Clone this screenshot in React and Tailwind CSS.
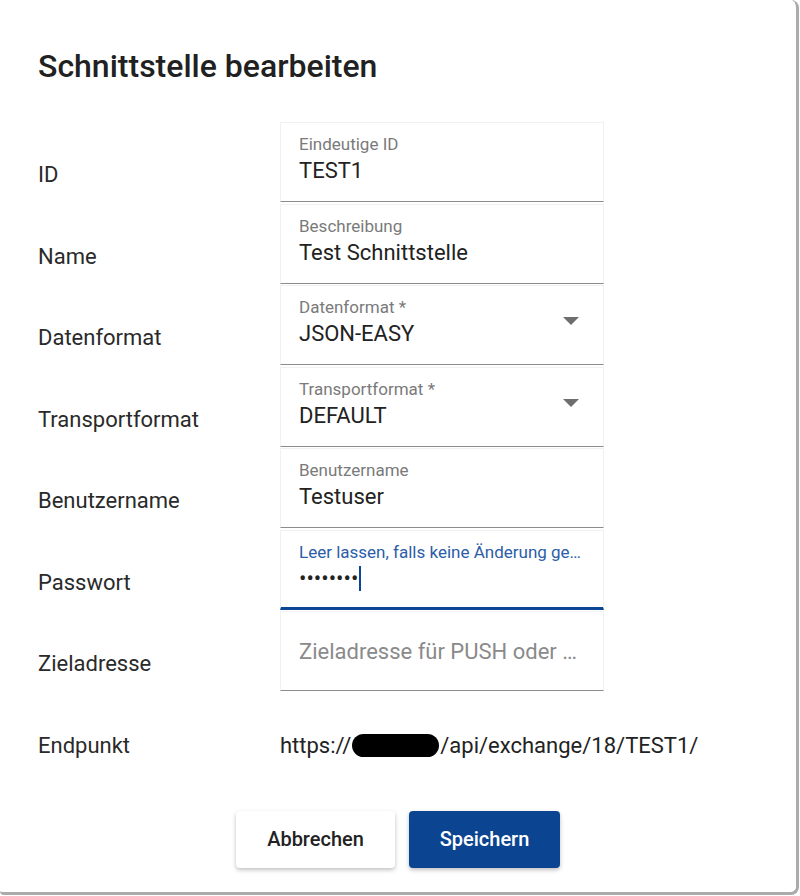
const rows = [
  { label: 'ID', field: 'Eindeutige ID', value: 'TEST1' },
  { label: 'Name', field: 'Beschreibung', value: 'Test Schnittstelle' },
  { label: 'Datenformat', field: 'Datenformat *', value: 'JSON-EASY', select: true },
  { label: 'Transportformat', field: 'Transportformat *', value: 'DEFAULT', select: true },
  { label: 'Benutzername', field: 'Benutzername', value: 'Testuser' },
];

function Field({ field, value, select }) {
  return (
    <div className="relative h-[80px] w-[324px] border-x border-t border-[#f1f1f1] border-b-[1.5px] border-b-[#8c8c8c] bg-white pl-[18px] pt-[12px]">
      <div className="text-[17px] leading-[18px] text-[#7a7a7a]">{field}</div>
      <div className="mt-[4px] text-[22px] leading-[28px] text-[#222]">{value}</div>
      {select ? (
        <svg className="absolute right-[24px] top-[31px]" width="16" height="8" viewBox="0 0 16 8">
          <path d="M0 0 L16 0 L8 8 Z" fill="#6e6e6e" />
        </svg>
      ) : null}
    </div>
  );
}

function Row({ label, children }) {
  return (
    <div className="mb-[1.5px] flex">
      <div className="w-[242px] pt-[39px] text-[22px] leading-[28px] text-[#2a2a2a]">{label}</div>
      {children}
    </div>
  );
}

export default function App() {
  return (
    <div className="h-[896px] w-[800px] bg-white" style={{ fontFamily: 'Roboto, "Noto Sans", sans-serif' }}>
      <div className="h-[895px] w-[799px] rounded-r-[8px] rounded-bl-[4px] border-r-[3px] border-b-[3px] border-[#ababab] pl-[38px] pt-[46px]">
        <h1 className="text-[32px] font-medium leading-[40px] text-[#212121]">Schnittstelle bearbeiten</h1>

        <div className="mt-[36px]">
          {rows.map((row) => (
            <Row key={row.label} label={row.label}>
              <Field field={row.field} value={row.value} select={row.select} />
            </Row>
          ))}

          <Row label="Passwort">
            <div className="h-[80px] w-[324px] border-x border-t border-[#f1f1f1] border-b-[3px] border-b-[#0c4696] bg-white pl-[18px] pt-[12px]">
              <div className="text-[17px] leading-[18px] text-[#2b5ea8]">Leer lassen, falls keine Änderung ge…</div>
              <div className="mt-[4px] flex items-center text-[22px] leading-[28px] text-[#222]">
                <span>••••••••</span>
                <span className="ml-[1px] h-[25px] w-[2px] bg-[#0c4696]" />
              </div>
            </div>
          </Row>

          <Row label="Zieladresse">
            <div className="h-[80px] w-[324px] border-x border-t border-[#f1f1f1] border-b-[1.5px] border-b-[#8c8c8c] bg-white pl-[18px] pt-[26px] text-[22px] leading-[28px] text-[#8a8a8a]">
              Zieladresse für PUSH oder …
            </div>
          </Row>

          <div className="flex pt-[39px]">
            <div className="w-[242px] text-[22px] leading-[28px] text-[#2a2a2a]">Endpunkt</div>
            <div className="flex items-center text-[22px] leading-[28px] text-[#222]">
              <span>https://</span>
              <span className="mx-[1px] h-[23px] w-[87px] rounded-full bg-black" />
              <span>/api/exchange/18/TEST1/</span>
            </div>
          </div>
        </div>

        <div className="-ml-[38px] mt-[51px] flex justify-center gap-[14px]">
          <button className="h-[57px] w-[159px] rounded-[4px] bg-white text-[20px] font-medium text-[#222] shadow-[0_2px_4px_rgba(0,0,0,0.25)]">
            Abbrechen
          </button>
          <button className="h-[57px] w-[151px] rounded-[4px] bg-[#0b4491] text-[20px] font-medium text-white shadow-[0_2px_4px_rgba(0,0,0,0.25)]">
            Speichern
          </button>
        </div>
      </div>
    </div>
  );
}
